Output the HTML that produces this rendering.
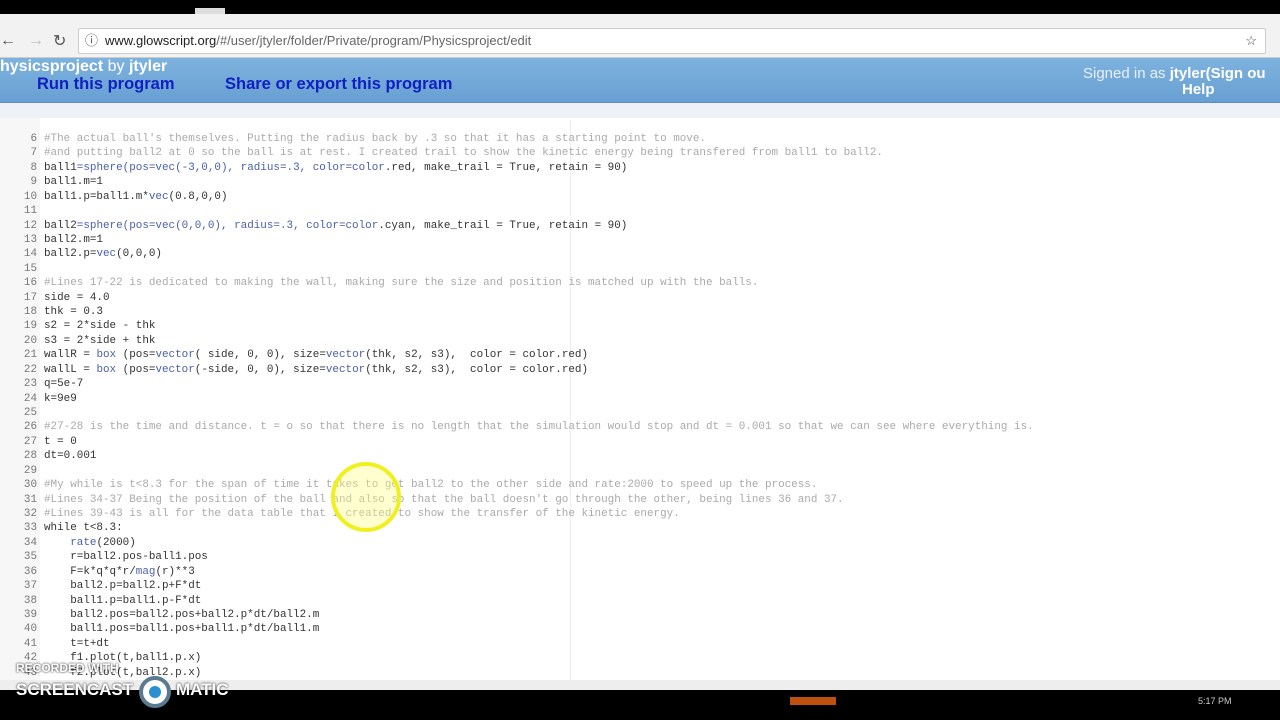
<!DOCTYPE html>
<html><head><meta charset="utf-8"><style>
*{margin:0;padding:0;box-sizing:border-box}
body{width:1280px;height:720px;overflow:hidden;background:#fff;font-family:"Liberation Sans",sans-serif;position:relative}
.top{position:absolute;left:0;top:0;width:1280px;height:14px;background:#000}
.tab{position:absolute;left:195px;top:8px;width:30px;height:10px;background:#ddd}
.bar{position:absolute;left:0;top:14px;width:1280px;height:44px;background:#f2f2f2;border-bottom:1px solid #ccc}
.url{position:absolute;left:78px;top:28px;width:1188px;height:26px;background:#fff;border:1px solid #ccc;border-radius:2px;font-size:13px;color:#222;line-height:24px;padding-left:26px}
.url .g{color:#666}
.hdr{position:absolute;left:0;top:58px;width:1280px;height:45px;background:linear-gradient(#7eb2de,#68a0d3);border-bottom:1px solid #5a8fc4}
.sub{position:absolute;left:0;top:103px;width:1280px;height:15px;background:#eef1f6}
.gut{position:absolute;left:0;top:118px;width:40px;height:572px;background:#f7f7f7}
.code{position:absolute;left:0;top:132px;font-family:"Liberation Mono",monospace;font-size:10.93px;line-height:14.42px;color:#333;white-space:pre}
.ln{display:inline-block;width:37px;text-align:right;color:#777;margin-right:7px}
.c{color:#aaa}.b{color:#4a5fa8}
.bot{position:absolute;left:0;top:690px;width:1280px;height:30px;background:#000}
.vl{position:absolute;left:570px;top:120px;width:1px;height:560px;background:#eee}
</style></head><body>
<div class="top"></div><div class="tab"></div>
<div class="bar">
<div style="position:absolute;left:0;top:18px;font-size:16px;color:#555">&#8592;</div>
<div style="position:absolute;left:28px;top:18px;font-size:16px;color:#bbb">&#8594;</div>
<div style="position:absolute;left:53px;top:17px;font-size:16px;color:#555">&#8635;</div>
</div>
<div class="url"><span style="position:absolute;left:6px;top:0;color:#555">&#9432;</span>www.glowscript.org<span class="g">/#/user/jtyler/folder/Private/program/Physicsproject/edit</span><span style="position:absolute;right:8px;top:0;color:#444">&#9734;</span></div>
<div class="hdr">
<div style="position:absolute;left:0;top:0px;font-size:16px;color:#fff;font-weight:bold">hysicsproject <span style="font-weight:normal">by</span> jtyler</div>
<div style="position:absolute;left:37px;top:17px;font-size:16.5px;color:#1020c0;font-weight:bold">Run this program</div>
<div style="position:absolute;left:225px;top:17px;font-size:16.5px;color:#1020c0;font-weight:bold">Share or export this program</div>
<div style="position:absolute;left:1083px;top:7px;font-size:15px;color:#e8f0fa;white-space:nowrap">Signed in as <b style="color:#fff">jtyler(Sign ou</b></div>
<div style="position:absolute;left:1182px;top:23px;font-size:15px;color:#fff;font-weight:bold">Help</div>
</div>
<div class="sub"></div>
<div class="gut"></div><div class="vl"></div>
<div class="code"><span class="ln">6</span><span class="c">#The actual ball's themselves. Putting the radius back by .3 so that it has a starting point to move.</span>
<span class="ln">7</span><span class="c">#and putting ball2 at 0 so the ball is at rest. I created trail to show the kinetic energy being transfered from ball1 to ball2.</span>
<span class="ln">8</span>ball1<span class="b">=sphere(pos=vec(-3,0,0), radius=.3, color=color</span>.red, make_trail = True, retain = 90)
<span class="ln">9</span>ball1.m=1
<span class="ln">10</span>ball1.p=ball1.m*<span class="b">vec</span>(0.8,0,0)
<span class="ln">11</span>
<span class="ln">12</span>ball2<span class="b">=sphere(pos=vec(0,0,0), radius=.3, color=color</span>.cyan, make_trail = True, retain = 90)
<span class="ln">13</span>ball2.m=1
<span class="ln">14</span>ball2.p=<span class="b">vec</span>(0,0,0)
<span class="ln">15</span>
<span class="ln">16</span><span class="c">#Lines 17-22 is dedicated to making the wall, making sure the size and position is matched up with the balls.</span>
<span class="ln">17</span>side = 4.0
<span class="ln">18</span>thk = 0.3
<span class="ln">19</span>s2 = 2*side - thk
<span class="ln">20</span>s3 = 2*side + thk
<span class="ln">21</span>wallR = <span class="b">box</span> (pos=<span class="b">vector</span>( side, 0, 0), size=<span class="b">vector</span>(thk, s2, s3),  color = color.red)
<span class="ln">22</span>wallL = <span class="b">box</span> (pos=<span class="b">vector</span>(-side, 0, 0), size=<span class="b">vector</span>(thk, s2, s3),  color = color.red)
<span class="ln">23</span>q=5e-7
<span class="ln">24</span>k=9e9
<span class="ln">25</span>
<span class="ln">26</span><span class="c">#27-28 is the time and distance. t = o so that there is no length that the simulation would stop and dt = 0.001 so that we can see where everything is.</span>
<span class="ln">27</span>t = 0
<span class="ln">28</span>dt=0.001
<span class="ln">29</span>
<span class="ln">30</span><span class="c">#My while is t&lt;8.3 for the span of time it takes to get ball2 to the other side and rate:2000 to speed up the process.</span>
<span class="ln">31</span><span class="c">#Lines 34-37 Being the position of the ball and also so that the ball doesn't go through the other, being lines 36 and 37.</span>
<span class="ln">32</span><span class="c">#Lines 39-43 is all for the data table that I created to show the transfer of the kinetic energy.</span>
<span class="ln">33</span>while t&lt;8.3:
<span class="ln">34</span>    <span class="b">rate</span>(2000)
<span class="ln">35</span>    r=ball2.pos-ball1.pos
<span class="ln">36</span>    F=k*q*q*r/<span class="b">mag</span>(r)**3
<span class="ln">37</span>    ball2.p=ball2.p+F*dt
<span class="ln">38</span>    ball1.p=ball1.p-F*dt
<span class="ln">39</span>    ball2.pos=ball2.pos+ball2.p*dt/ball2.m
<span class="ln">40</span>    ball1.pos=ball1.pos+ball1.p*dt/ball1.m
<span class="ln">41</span>    t=t+dt
<span class="ln">42</span>    f1.plot(t,ball1.p.x)
<span class="ln">43</span>    f2.plot(t,ball2.p.x)</div>
<div style="position:absolute;left:331px;top:462px;width:70px;height:70px;border-radius:50%;background:rgba(255,255,120,.35);border:4px solid #f0f020"></div>
<div style="position:absolute;left:0;top:680px;width:1280px;height:10px;background:#eee"></div>
<div class="bot"></div>
<div style="position:absolute;left:16px;top:661px;font-size:12px;font-weight:bold;color:#fff;text-shadow:0 0 2px #000">RECORDED WITH</div>
<div style="position:absolute;left:16px;top:680px;font-size:17px;font-weight:bold;color:#fff;text-shadow:0 0 2px #000">SCREENCAST</div>
<div style="position:absolute;left:139px;top:676px;width:32px;height:32px;border-radius:50%;border:4px solid #5a7a90;background:#fff"><div style="margin:6px;width:12px;height:12px;border-radius:50%;background:#2a90d0"></div></div>
<div style="position:absolute;left:176px;top:680px;font-size:17px;font-weight:bold;color:#fff;text-shadow:0 0 2px #000">MATIC</div>
<div style="position:absolute;left:790px;top:697px;width:46px;height:8px;background:#c05010"></div>
<div style="position:absolute;left:1198px;top:696px;font-size:9px;color:#ccc">5:17 PM</div>
</body></html>
